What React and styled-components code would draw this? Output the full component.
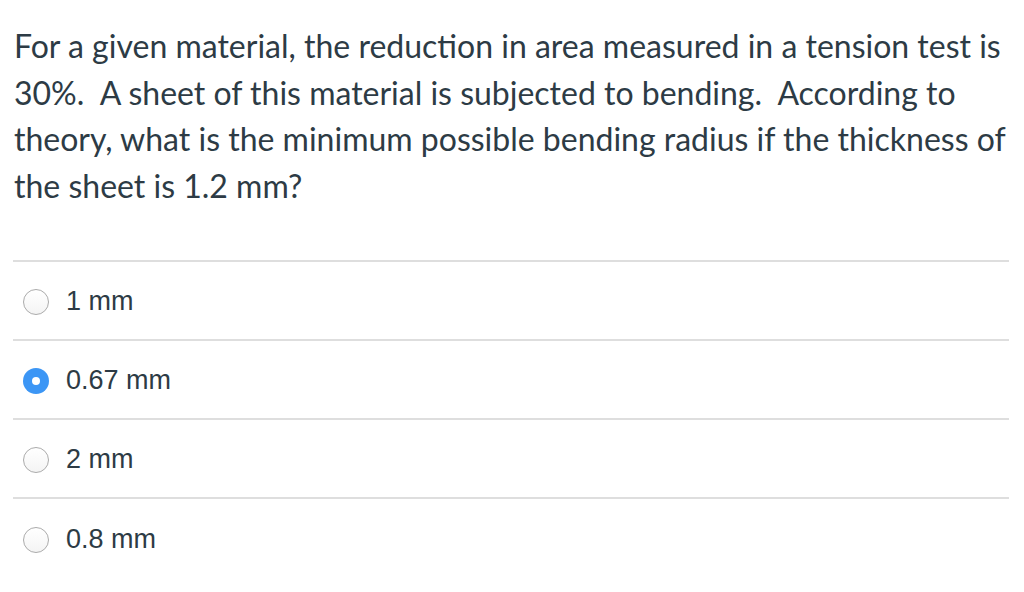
import styled, { createGlobalStyle } from 'styled-components';

const GlobalStyle = createGlobalStyle`
  html, body {
    margin: 0;
    padding: 0;
    background: #fff;
  }
  body {
    color: #2d3b45;
  }
`;

const Page = styled.main`
  padding: 23px 15px 0 13px;
  width: 996px;
`;

const Question = styled.p`
  margin: 0 0 0 1px;
  font-family: Lato, "Liberation Sans", sans-serif;
  font-size: 32px;
  line-height: 46.5px;
  color: #2d3b45;
`;

const Answers = styled.ul`
  list-style: none;
  margin: 51px 0 0;
  padding: 0;
`;

const Answer = styled.li`
  display: flex;
  align-items: center;
  gap: 17px;
  height: 77px;
  border-top: 2px solid #dedede;
  padding-left: 10px;
  &:last-child {
    height: 79px;
  }
`;

const Radio = styled.span`
  box-sizing: border-box;
  width: 26px;
  height: 26px;
  border-radius: 50%;
  flex-shrink: 0;
  display: flex;
  align-items: center;
  justify-content: center;
  margin-top: 3px;
  border: ${({ $checked }) => ($checked ? 'none' : '1.5px solid #ababab')};
  background: ${({ $checked }) =>
    $checked ? '#3c96f5' : 'linear-gradient(#fff, #f4f4f4)'};
  &::after {
    content: '';
    display: ${({ $checked }) => ($checked ? 'block' : 'none')};
    width: 8px;
    height: 8px;
    border-radius: 50%;
    background: #fff;
  }
`;

const Label = styled.span`
  font-family: "Liberation Sans", Arial, sans-serif;
  font-size: 27px;
  color: #2d3b45;
  margin-top: 2px;
`;

const options = [
  { text: '1 mm', checked: false },
  { text: '0.67 mm', checked: true },
  { text: '2 mm', checked: false },
  { text: '0.8 mm', checked: false },
];

export default function App() {
  return (
    <>
      <GlobalStyle />
      <Page>
        <Question>
          For a given material, the reduction in area measured in a tension test is
          30%.&nbsp; A sheet of this material is subjected to bending.&nbsp; According to
          theory, what is the minimum possible bending radius if the thickness of
          the sheet is 1.2 mm?
        </Question>
        <Answers>
          {options.map((o) => (
            <Answer key={o.text}>
              <Radio $checked={o.checked} />
              <Label>{o.text}</Label>
            </Answer>
          ))}
        </Answers>
      </Page>
    </>
  );
}
